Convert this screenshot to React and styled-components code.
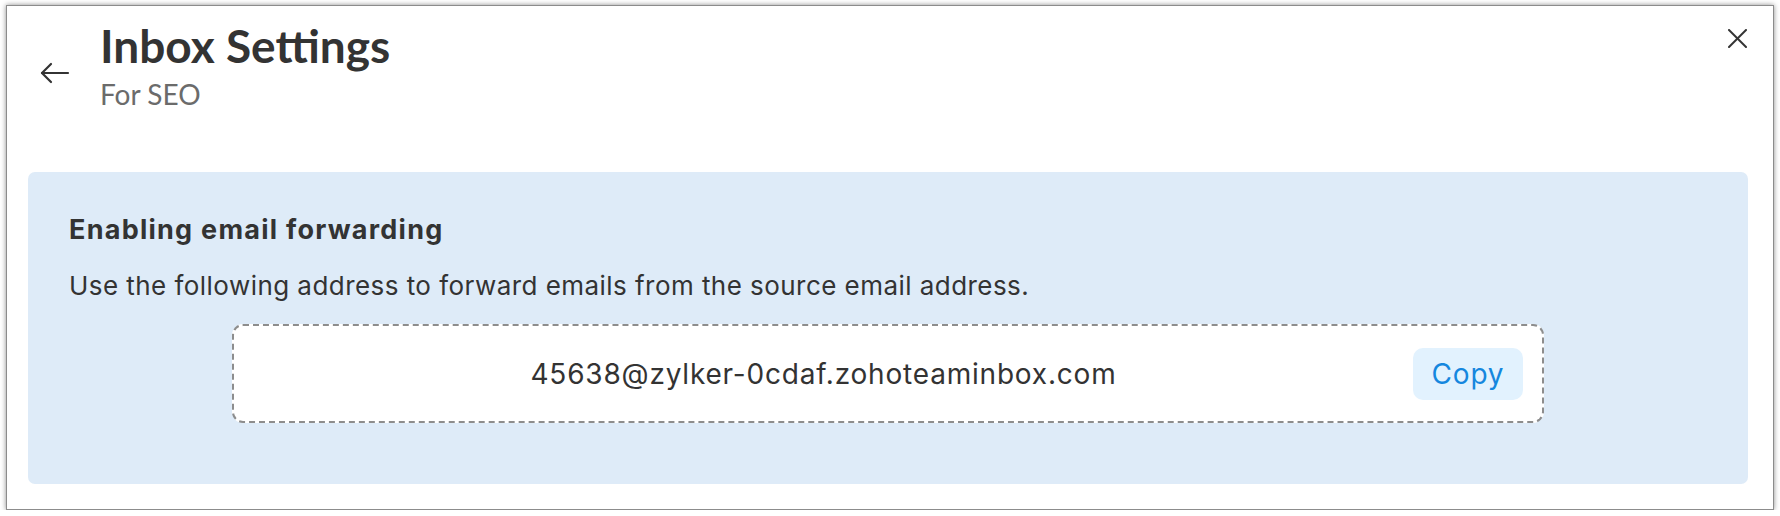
import React from 'react';
import styled, { createGlobalStyle } from 'styled-components';

const GlobalStyle = createGlobalStyle`
  html, body {
    margin: 0;
    padding: 0;
    background: #ffffff;
  }
  body {
    font-family: Inter, Lato, "Noto Sans", sans-serif;
    color: #333333;
  }
`;

const Dialog = styled.div`
  box-sizing: border-box;
  margin: 5px 6px 0 6px;
  height: 505px;
  background: #ffffff;
  border: 1px solid #8c8c8c;
  box-shadow: 0 0 5px rgba(0, 0, 0, 0.45);
  display: flex;
  flex-direction: column;
`;

const Header = styled.header`
  display: flex;
  align-items: flex-start;
  padding: 12px 25px 0 32px;
  height: 166px;
  box-sizing: border-box;
`;

const IconButton = styled.button`
  border: 0;
  background: transparent;
  padding: 0;
  margin: ${props => props.$margin || '0'};
  width: ${props => props.$size}px;
  height: ${props => props.$size}px;
  display: flex;
  align-items: center;
  justify-content: center;
  color: #333333;
  cursor: pointer;
  flex-shrink: 0;
`;

const TitleBlock = styled.div`
  display: flex;
  flex-direction: column;
  margin-left: 29px;
  flex: 1;
  font-family: Lato, "Noto Sans", sans-serif;
`;

const Title = styled.h1`
  margin: 0;
  font-size: 46px;
  line-height: 56px;
  font-weight: 700;
  color: #333333;
`;

const Subtitle = styled.div`
  font-size: 28px;
  line-height: 34px;
  color: #6b6b6b;
  margin-top: 3px;
`;

const Panel = styled.section`
  margin: 0 25px 0 21px;
  height: 312px;
  box-sizing: border-box;
  background: #deebf8;
  border-radius: 7px;
  padding: 41px 41px 0 41px;
  display: flex;
  flex-direction: column;
`;

const PanelHeading = styled.h2`
  margin: 0;
  font-size: 27px;
  line-height: 34px;
  font-weight: 700;
  letter-spacing: 1.25px;
  color: #333333;
`;

const PanelText = styled.p`
  margin: 23px 0 0 0;
  font-size: 26px;
  line-height: 32px;
  letter-spacing: 0.45px;
  color: #333333;
`;

const AddressBox = styled.div`
  align-self: center;
  margin-top: 22px;
  width: 1312px;
  height: 99px;
  box-sizing: border-box;
  background: #ffffff;
  border: 2px dashed #8d8d8d;
  border-radius: 11px;
  display: flex;
  align-items: center;
  padding: 0 19px 0 0;
`;

const Address = styled.span`
  flex: 1;
  text-align: center;
  font-size: 28px;
  letter-spacing: 0.8px;
  color: #333333;
`;

const CopyButton = styled.button`
  border: 0;
  background: #e2f2fe;
  color: #1587de;
  font-family: Inter, Lato, "Noto Sans", sans-serif;
  font-size: 28px;
  letter-spacing: 0.8px;
  width: 110px;
  height: 52px;
  border-radius: 10px;
  cursor: pointer;
`;

const ArrowLeft = () => (
  <svg width="30" height="22" viewBox="0 0 30 22" fill="none" stroke="currentColor" strokeWidth="2.2" strokeLinecap="round" strokeLinejoin="round">
    <path d="M28 11H2" />
    <path d="M11 2L2 11l9 9" />
  </svg>
);

const CloseIcon = () => (
  <svg width="19" height="19" viewBox="0 0 19 19" fill="none" stroke="currentColor" strokeWidth="2" strokeLinecap="round">
    <path d="M1 1l17 17" />
    <path d="M18 1L1 18" />
  </svg>
);

const App = () => (
  <>
    <GlobalStyle />
    <Dialog>
      <Header>
        <IconButton $size={32} $margin="39px 0 0 0" aria-label="Back">
          <ArrowLeft />
        </IconButton>
        <TitleBlock>
          <Title>Inbox Settings</Title>
          <Subtitle>For SEO</Subtitle>
        </TitleBlock>
        <IconButton $size={22} $margin="9px 0 0 0" aria-label="Close">
          <CloseIcon />
        </IconButton>
      </Header>
      <Panel>
        <PanelHeading>Enabling email forwarding</PanelHeading>
        <PanelText>Use the following address to forward emails from the source email address.</PanelText>
        <AddressBox>
          <Address>45638@zylker-0cdaf.zohoteaminbox.com</Address>
          <CopyButton>Copy</CopyButton>
        </AddressBox>
      </Panel>
    </Dialog>
  </>
);

export default App;
